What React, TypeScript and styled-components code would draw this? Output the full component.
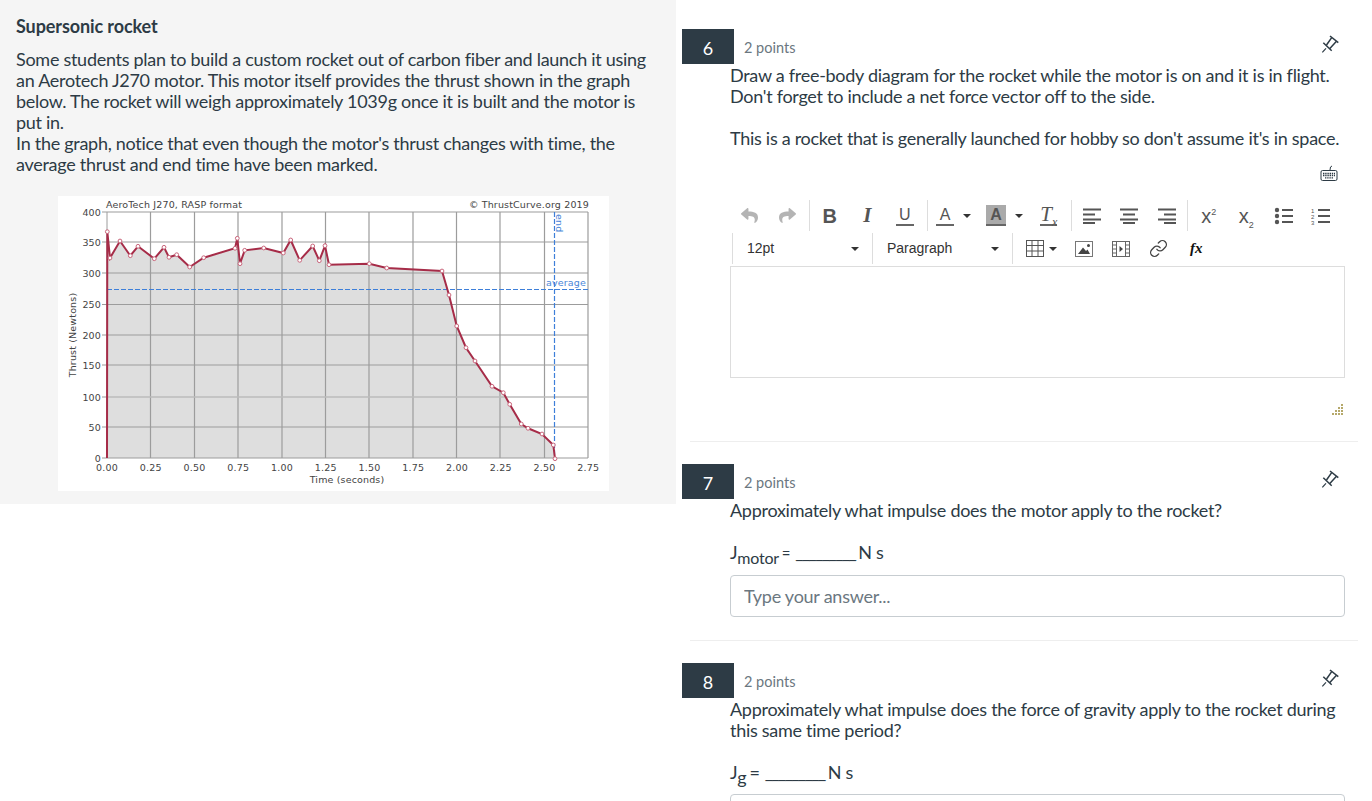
import React from 'react';
import styled, { createGlobalStyle } from 'styled-components';
import { FaReply, FaShare } from 'react-icons/fa';
import { Link as LinkIcon } from 'lucide-react';

const GlobalStyle = createGlobalStyle`
  html, body {
    margin: 0;
    padding: 0;
    background: #fff;
    color: #2d3b45;
    font-family: Lato, "Noto Sans", sans-serif;
  }
  * { box-sizing: border-box; }
`;

const Page = styled.div`
  display: grid;
  grid-template-columns: 676px 1fr;
  align-items: start;
  width: 1372px;
  height: 801px;
  overflow: hidden;
`;

const Passage = styled.section`
  background: #f5f5f5;
  height: 504px;
  padding: 16px 16px 13px;
`;

const PassageTitle = styled.h2`
  margin: 0 0 12px;
  font-size: 18px;
  line-height: 21px;
  font-weight: 700;
  letter-spacing: -0.1px;
`;

const PassageText = styled.p`
  margin: 0 0 21px;
  font-size: 18px;
  line-height: 21px;
  letter-spacing: -0.28px;
`;

const ChartFrame = styled.svg`
  display: block;
  margin-left: 42px;
  width: 551px;
  height: 295px;
  background: #fff;
`;

const Questions = styled.main`
  padding-top: 29px;
`;

const QuestionBlock = styled.article<{ $last?: boolean }>`
  margin: 0 14px 22px 14px;
  padding-bottom: ${(p) => (p.$last ? '0' : '23px')};
  border-bottom: ${(p) => (p.$last ? 'none' : '1px solid #eee')};
`;

const QuestionHeader = styled.header`
  display: flex;
  align-items: center;
  height: 35px;
  margin-left: -8px;
  margin-right: 18px;
`;

const NumberBadge = styled.div`
  display: flex;
  align-items: center;
  justify-content: center;
  width: 52px;
  height: 35px;
  padding-top: 2px;
  background: #2d3b45;
  color: #fff;
  font-size: 18px;
`;

const Points = styled.span`
  margin-left: 10px;
  padding-top: 2px;
  font-size: 14.5px;
  color: #6b7780;
`;

const PinWrap = styled.span`
  display: flex;
  margin-left: auto;
  margin-bottom: 5px;
`;

const QuestionBody = styled.div`
  margin: 1px 0 0 40px;
  width: 615px;
  font-size: 18px;
  line-height: 21px;
`;

const Para = styled.p<{ $gap?: number }>`
  margin: 0 0 ${(p) => p.$gap ?? 0}px;
  letter-spacing: -0.28px;
`;

const KeyboardRow = styled.div`
  display: flex;
  justify-content: flex-end;
  height: 16px;
  margin: 16px 7px 18px 0;
`;

const ToolRow = styled.div`
  display: flex;
  align-items: center;
  height: 33px;
  margin-left: 1px;
`;

const ToolGroup = styled.div<{ $w: number; $inset?: number }>`
  display: flex;
  align-items: center;
  width: ${(p) => p.$w}px;
  height: 31px;
  padding-left: ${(p) => p.$inset ?? 0}px;
  border-right: 1px solid #ddd;
`;

const ToolTail = styled.div`
  display: flex;
  align-items: center;
  padding-left: 2px;
`;

const ToolBtn = styled.span<{ $w?: number; $inset?: number }>`
  display: flex;
  align-items: center;
  justify-content: center;
  flex: none;
  width: ${(p) => p.$w ?? 37.5}px;
  height: 30px;
  padding-left: ${(p) => p.$inset ?? 0}px;
  color: #555;
  font-family: "Liberation Sans", sans-serif;
`;

const Caret = styled.i<{ $gap?: number }>`
  display: block;
  width: 0;
  height: 0;
  margin-left: ${(p) => p.$gap ?? 9}px;
  border-left: 4px solid transparent;
  border-right: 4px solid transparent;
  border-top: 4px solid #333;
`;

const BoldGlyph = styled.span`
  font-size: 20px;
  font-weight: 700;
  line-height: 1;
`;

const ItalicGlyph = styled.span`
  font-family: "Liberation Serif", serif;
  font-size: 21px;
  font-weight: 700;
  font-style: italic;
  line-height: 1;
`;

const Glyph = styled.span<{ $mark?: boolean }>`
  display: inline-block;
  width: ${(p) => (p.$mark ? '20px' : '18px')};
  text-align: center;
  font-size: 16px;
  font-weight: ${(p) => (p.$mark ? 700 : 400)};
  line-height: 19px;
  background: ${(p) => (p.$mark ? '#aaa' : 'transparent')};
  border-bottom: 2px solid #666;
`;

const ScriptGlyph = styled.span`
  font-size: 20px;
  line-height: 1;
  color: #555;
  sup, sub {
    font-size: 9px;
    line-height: 0;
  }
`;

const ClearGlyph = styled.span`
  font-family: "Liberation Serif", serif;
  font-style: italic;
  font-size: 21px;
  line-height: 19px;
  color: #555;
  border-bottom: 2px solid #666;
  sub { font-size: 12px; line-height: 0; }
`;

const FxGlyph = styled.span`
  font-family: "Liberation Serif", serif;
  font-style: italic;
  font-weight: 700;
  font-size: 15px;
  color: #111;
`;

const SelectBox = styled.div`
  display: flex;
  align-items: center;
  justify-content: space-between;
  width: 140px;
  height: 31px;
  padding: 0 13px 0 14px;
  border-right: 1px solid #ddd;
  font-family: "Liberation Sans", sans-serif;
  font-size: 14px;
  color: #333;
`;

const SelectStart = styled.span`
  width: 1px;
  height: 31px;
  margin-left: 1px;
  background: #ddd;
`;

const EditorBox = styled.div`
  height: 112px;
  margin-top: 1px;
  border: 1px solid #ddd;
`;

const ResizeRow = styled.div`
  display: flex;
  justify-content: flex-end;
  height: 14px;
  margin: 26px 2px 0 0;
`;

const Formula = styled.p<{ $gap: number }>`
  margin: ${(p) => p.$gap}px 0 11px;
  font-size: 18px;
  line-height: 21px;
  letter-spacing: -0.25px;
`;

const Sub = styled.sub<{ $size: number }>`
  font-size: ${(p) => p.$size}px;
  line-height: 0;
`;

const Equals = styled.span<{ $size: number }>`
  margin-left: 3px;
  font-size: ${(p) => p.$size}px;
`;

const Blank = styled.span`
  margin: 0 3px 0 5px;
  letter-spacing: -1.6px;
`;

const AnswerInput = styled.input`
  display: block;
  width: 100%;
  height: 42px;
  padding: 0 13px;
  border: 1px solid #c7cdd1;
  border-radius: 4px;
  background: #fff;
  font-family: Lato, sans-serif;
  font-size: 18px;
  letter-spacing: -0.25px;
  color: #2d3b45;
  &::placeholder { color: #6b7780; opacity: 1; }
`;

// chart points, read off the screenshot in page pixels
const curve: [number, number][] = [
  [107.3, 231.7], [110, 258], [120, 241], [130.3, 255.7], [138, 246.3], [154.3, 258.7],
  [164, 247.3], [169, 257.3], [176.7, 254.7], [189.7, 267], [203.7, 257.7], [235, 248.3],
  [237.3, 238.3], [240, 263.7], [244.7, 250.3], [263.7, 248], [283.3, 253], [290.7, 240],
  [299.7, 260.3], [312.7, 246], [319.3, 260.7], [325, 245.7], [329, 264.7], [369.3, 263.7],
  [386.7, 268], [442, 271], [449, 295], [456.7, 326], [466, 347.7], [475, 361], [492, 386.3],
  [503.3, 392.7], [509.7, 404.3], [521.3, 424], [528, 428.3], [542, 434], [553.3, 445],
  [555, 458.7],
];
const gridX = [150.5, 194.5, 238, 282, 325.5, 369, 413, 456.5, 500, 544.5, 588];
const gridY = [212, 242, 273, 304.5, 335, 365, 427, 458];
const yLabels: [string, number][] = [
  ['400', 212], ['350', 242], ['300', 273], ['250', 304], ['200', 335], ['150', 365], ['100', 397], ['50', 427], ['0', 458],
];
const xLabels = ['0.00', '0.25', '0.50', '0.75', '1.00', '1.25', '1.50', '1.75', '2.00', '2.25', '2.50', '2.75'];

const ChartLabel = styled.text<{ $blue?: boolean }>`
  font-family: "DejaVu Sans", sans-serif;
  font-size: 9.5px;
  letter-spacing: 0.15px;
  fill: ${(p) => (p.$blue ? '#4a86d8' : '#444')};
`;

const ThrustChart = () => {
  const line = curve.map(([x, y]) => `${x},${y}`).join(' ');
  return (
    <ChartFrame viewBox="58 196 551 295">
      <polygon points={`107,458 ${line} 555,458`} fill="#dedede" />
      {gridX.map((x) => (
        <line key={x} x1={x} x2={x} y1={212} y2={458} stroke="#9c9c9c" strokeWidth={1.2} />
      ))}
      {gridY.map((y) => (
        <line key={y} x1={102} x2={588} y1={y} y2={y} stroke="#9c9c9c" strokeWidth={1.2} />
      ))}
      <line x1={102} x2={588} y1={397} y2={397} stroke="#bbb" strokeWidth={1.6} />
      <line x1={107} x2={107} y1={212} y2={458} stroke="#9c9c9c" />
      <line x1={107} x2={588} y1={289.5} y2={289.5} stroke="#3d7fd9" strokeWidth={1.2} strokeDasharray="5 2" />
      <line x1={554.5} x2={554.5} y1={212} y2={458} stroke="#3d7fd9" strokeWidth={1.2} strokeDasharray="5 2" />
      <polyline points={`107,458 ${line}`} fill="none" stroke="#a62c48" strokeWidth={2} />
      {curve.map(([x, y]) => (
        <circle key={`${x}-${y}`} cx={x} cy={y} r={1.9} fill="#fff" stroke="#c9667c" strokeWidth={1} />
      ))}
      <ChartLabel x={106} y={208}>AeroTech J270, RASP format</ChartLabel>
      <ChartLabel x={589} y={208} textAnchor="end">© ThrustCurve.org 2019</ChartLabel>
      <ChartLabel $blue x={586} y={286} textAnchor="end">average</ChartLabel>
      <ChartLabel $blue transform="translate(556 214) rotate(90)">end</ChartLabel>
      {yLabels.map(([label, y]) => (
        <ChartLabel key={label} x={101} y={y + 3.5} textAnchor="end">{label}</ChartLabel>
      ))}
      {xLabels.map((label, i) => (
        <ChartLabel key={label} x={107 + i * 43.75} y={471} textAnchor="middle">{label}</ChartLabel>
      ))}
      <ChartLabel x={347} y={483} textAnchor="middle">Time (seconds)</ChartLabel>
      <ChartLabel transform="translate(76 335) rotate(-90)" textAnchor="middle">Thrust (Newtons)</ChartLabel>
    </ChartFrame>
  );
};

const PinIcon = () => (
  <svg width="20" height="20" viewBox="0 0 20 20" fill="none" stroke="#2d3b45" strokeWidth="1.5">
    <path d="M10 2 L18.3 8.7" />
    <path d="M3.3 8.7 L11.7 16.7" />
    <path d="M6.5 11 L11.7 3.6 M9.6 14.7 L16.5 7.3" />
    <path d="M6 14.3 L2.3 18.3" strokeWidth="1.2" />
  </svg>
);

const KeyboardIcon = () => (
  <svg width="18" height="16" viewBox="0 0 18 16" fill="none" stroke="#2d3b45">
    <rect x="1" y="5.5" width="16" height="10" rx="1.5" />
    <path d="M10 5 L10.5 2 L12 1" />
    <path d="M3 8.5h12M3 10.5h12M5 12.8h8" strokeWidth="1.3" strokeDasharray="1.4 .8" />
  </svg>
);

const AlignIcon = ({ side }: { side: 'left' | 'center' | 'right' }) => {
  const start = side === 'left' ? 1 : side === 'center' ? 4 : 7;
  return (
    <svg width="20" height="18" viewBox="0 0 20 18" stroke="#555" strokeWidth="2.2">
      <path d="M1 2.5h18M1 12.5h18" />
      <path d={`M${start} 7.5h12M${start} 16h12`} />
    </svg>
  );
};

const BulletIcon = () => (
  <svg width="20" height="18" viewBox="0 0 20 18" fill="#555" stroke="none">
    <circle cx="3" cy="3" r="2.2" />
    <circle cx="3" cy="9" r="2.2" />
    <circle cx="3" cy="15" r="2.2" />
    <path d="M8 2h11v2H8zM8 8h11v2H8zM8 14h11v2H8z" />
  </svg>
);

const NumberIcon = () => (
  <svg width="20" height="18" viewBox="0 0 20 18" fill="#555">
    <text x="0" y="6" fontSize="6" fontFamily="Liberation Sans">1</text>
    <text x="0" y="12" fontSize="6" fontFamily="Liberation Sans">2</text>
    <text x="0" y="18" fontSize="6" fontFamily="Liberation Sans">3</text>
    <path d="M7 2h12v2H7zM7 8h12v2H7zM7 14h12v2H7z" />
  </svg>
);

const TableIcon = () => (
  <svg width="18" height="17" viewBox="0 0 18 17" fill="none" stroke="#555">
    <rect x="0.5" y="0.5" width="17" height="16" />
    <path d="M0 5.5h18M0 11h18M6 0v17M12 0v17" />
  </svg>
);

const ImageIcon = () => (
  <svg width="18" height="16" viewBox="0 0 18 16" fill="none">
    <rect x="0.5" y="0.5" width="17" height="15" stroke="#777" />
    <path d="M3 13 L8 6.5 L11 10 L12.5 8.5 L15 13 Z" fill="#444" />
    <circle cx="13.5" cy="4.5" r="1.5" fill="#444" />
  </svg>
);

const MediaIcon = () => (
  <svg width="18" height="16" viewBox="0 0 18 16" fill="none" stroke="#666">
    <rect x="0.5" y="0.5" width="17" height="15" />
    <path d="M4.5 0v16M13.5 0v16M0 4h4.5M0 8h4.5M0 12h4.5M13.5 4H18M13.5 8H18M13.5 12H18" />
    <path d="M7.5 5 L11 8 L7.5 11 Z" fill="#444" stroke="none" />
  </svg>
);

const ResizeHandle = () => (
  <svg width="11" height="11" viewBox="0 0 11 11" fill="#b5a86a">
    <path d="M9 0h2v2H9zM6 3h2v2H6zM9 3h2v2H9zM3 6h2v2H3zM6 6h2v2H6zM9 6h2v2H9zM0 9h2v2H0zM3 9h2v2H3zM6 9h2v2H6zM9 9h2v2H9z" />
  </svg>
);

const EditorToolbar = () => (
  <>
    <ToolRow>
      <ToolGroup $w={79}>
        <ToolBtn><FaReply size={17} color="#b4b4b4" /></ToolBtn>
        <ToolBtn><FaShare size={17} color="#b4b4b4" /></ToolBtn>
      </ToolGroup>
      <ToolGroup $w={118} $inset={1}>
        <ToolBtn><BoldGlyph>B</BoldGlyph></ToolBtn>
        <ToolBtn><ItalicGlyph>I</ItalicGlyph></ToolBtn>
        <ToolBtn><Glyph>U</Glyph></ToolBtn>
      </ToolGroup>
      <ToolGroup $w={144}>
        <ToolBtn $w={51}><Glyph>A</Glyph><Caret /></ToolBtn>
        <ToolBtn $w={51}><Glyph $mark>A</Glyph><Caret /></ToolBtn>
        <ToolBtn><ClearGlyph>T<sub>x</sub></ClearGlyph></ToolBtn>
      </ToolGroup>
      <ToolGroup $w={116} $inset={1}>
        <ToolBtn><AlignIcon side="left" /></ToolBtn>
        <ToolBtn><AlignIcon side="center" /></ToolBtn>
        <ToolBtn><AlignIcon side="right" /></ToolBtn>
      </ToolGroup>
      <ToolTail>
        <ToolBtn><ScriptGlyph>x<sup>2</sup></ScriptGlyph></ToolBtn>
        <ToolBtn><ScriptGlyph>x<sub>2</sub></ScriptGlyph></ToolBtn>
        <ToolBtn><BulletIcon /></ToolBtn>
        <ToolBtn><NumberIcon /></ToolBtn>
      </ToolTail>
    </ToolRow>
    <ToolRow>
      <SelectStart />
      <SelectBox>12pt<Caret /></SelectBox>
      <SelectBox>Paragraph<Caret /></SelectBox>
      <ToolBtn $w={52} $inset={4}><TableIcon /><Caret $gap={5} /></ToolBtn>
      <ToolBtn><ImageIcon /></ToolBtn>
      <ToolBtn><MediaIcon /></ToolBtn>
      <ToolBtn><LinkIcon size={19} strokeWidth={1.7} color="#444" /></ToolBtn>
      <ToolBtn><FxGlyph>fx</FxGlyph></ToolBtn>
    </ToolRow>
  </>
);

const Question: React.FC<{ n: number; last?: boolean; children: React.ReactNode }> = ({ n, last, children }) => (
  <QuestionBlock $last={last}>
    <QuestionHeader>
      <NumberBadge>{n}</NumberBadge>
      <Points>2 points</Points>
      <PinWrap><PinIcon /></PinWrap>
    </QuestionHeader>
    <QuestionBody>{children}</QuestionBody>
  </QuestionBlock>
);

const App: React.FC = () => (
  <Page>
    <GlobalStyle />
    <Passage>
      <PassageTitle>Supersonic rocket</PassageTitle>
      <PassageText>
        Some students plan to build a custom rocket out of carbon fiber and launch it using an Aerotech J270 motor. This motor itself provides the thrust shown in the graph below. The rocket will weigh approximately 1039g once it is built and the motor is put in.
        <br />
        In the graph, notice that even though the motor's thrust changes with time, the average thrust and end time have been marked.
      </PassageText>
      <ThrustChart />
    </Passage>
    <Questions>
      <Question n={6}>
        <Para $gap={21}>Draw a free-body diagram for the rocket while the motor is on and it is in flight. Don't forget to include a net force vector off to the side.</Para>
        <Para>This is a rocket that is generally launched for hobby so don't assume it's in space.</Para>
        <KeyboardRow><KeyboardIcon /></KeyboardRow>
        <EditorToolbar />
        <EditorBox />
        <ResizeRow><ResizeHandle /></ResizeRow>
      </Question>
      <Question n={7}>
        <Para>Approximately what impulse does the motor apply to the rocket?</Para>
        <Formula $gap={21}>J<Sub $size={16}>motor</Sub><Equals $size={15}>=</Equals><Blank>_________</Blank>N s</Formula>
        <AnswerInput placeholder="Type your answer..." />
      </Question>
      <Question n={8} last>
        <Para>Approximately what impulse does the force of gravity apply to the rocket during this same time period?</Para>
        <Formula $gap={21}>J<Sub $size={18}>g</Sub><Equals $size={18}>=</Equals><Blank>_________</Blank>N s</Formula>
        <AnswerInput />
      </Question>
    </Questions>
  </Page>
);

export default App;
